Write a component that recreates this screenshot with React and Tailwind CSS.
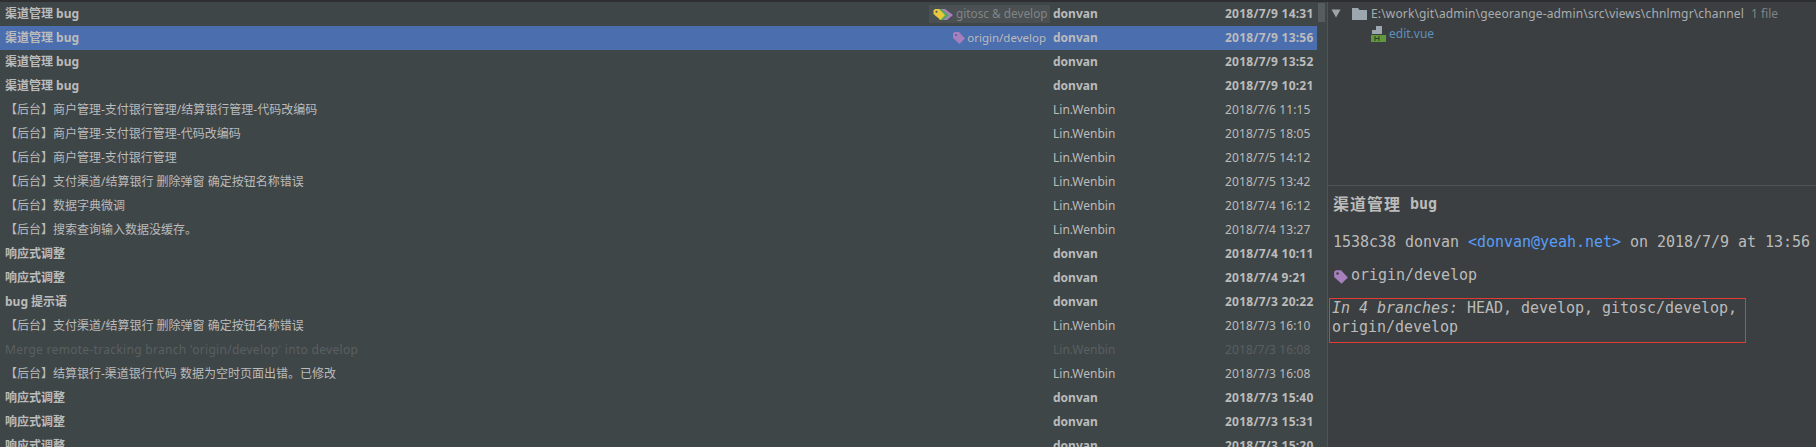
const B = 'bold'
const L = 'normal'
const D = 'dim'

const commits = [
  ['渠道管理 bug', 'donvan', '2018/7/9 14:31', B],
  ['渠道管理 bug', 'donvan', '2018/7/9 13:56', B],
  ['渠道管理 bug', 'donvan', '2018/7/9 13:52', B],
  ['渠道管理 bug', 'donvan', '2018/7/9 10:21', B],
  ['【后台】商户管理-支付银行管理/结算银行管理-代码改编码', 'Lin.Wenbin', '2018/7/6 11:15', L],
  ['【后台】商户管理-支付银行管理-代码改编码', 'Lin.Wenbin', '2018/7/5 18:05', L],
  ['【后台】商户管理-支付银行管理', 'Lin.Wenbin', '2018/7/5 14:12', L],
  ['【后台】支付渠道/结算银行 删除弹窗 确定按钮名称错误', 'Lin.Wenbin', '2018/7/5 13:42', L],
  ['【后台】数据字典微调', 'Lin.Wenbin', '2018/7/4 16:12', L],
  ['【后台】搜索查询输入数据没缓存。', 'Lin.Wenbin', '2018/7/4 13:27', L],
  ['响应式调整', 'donvan', '2018/7/4 10:11', B],
  ['响应式调整', 'donvan', '2018/7/4 9:21', B],
  ['bug 提示语', 'donvan', '2018/7/3 20:22', B],
  ['【后台】支付渠道/结算银行 删除弹窗 确定按钮名称错误', 'Lin.Wenbin', '2018/7/3 16:10', L],
  ["Merge remote-tracking branch 'origin/develop' into develop", 'Lin.Wenbin', '2018/7/3 16:08', D],
  ['【后台】结算银行-渠道银行代码 数据为空时页面出错。已修改', 'Lin.Wenbin', '2018/7/3 16:08', L],
  ['响应式调整', 'donvan', '2018/7/3 15:40', B],
  ['响应式调整', 'donvan', '2018/7/3 15:31', B],
  ['响应式调整', 'donvan', '2018/7/3 15:20', B],
]

function TagIcon({ hole, size = 14, className = '' }) {
  return (
    <svg width={size} height={size} viewBox="0 0 14 14" className={`shrink-0 ${className}`}>
      <path d="M1 2.5 L2.5 1 H7 L13 7.5 L7.5 13 L1 7 Z" fill="#a77fbd" />
      <circle cx="4" cy="4" r="1.1" fill={hole} />
    </svg>
  )
}

function MultiTagIcon() {
  return (
    <svg width="21" height="13" viewBox="0 0 21 13" className="shrink-0">
      <path d="M12 1 L20 7 L14 12 L10 12 L15 7 L8 1 Z" fill="#a77fbd" />
      <path d="M8 1 L16 7 L10 12 L6 12 L11 7 L4 1 Z" fill="#55a85a" />
      <path d="M0.5 2.5 L2 1 H6 L12 7 L7.5 12 L0.5 6 Z" fill="#e8c83c" />
      <circle cx="3.5" cy="3.7" r="1" fill="#4b5052" />
    </svg>
  )
}

function CommitRow({ row, index }) {
  const [title, author, date, kind] = row
  const selected = index === 1
  const color = kind === D ? 'text-[#5a5f61]' : 'text-[#bbbbbb]'
  const weight = kind === B ? 'font-bold' : 'font-normal'
  return (
    <div className={`flex h-6 shrink-0 items-center text-xs ${color} ${weight} ${selected ? 'bg-[#4b6eaf]' : ''}`}>
      <div className="flex w-[1053px] shrink-0 items-center pl-[5px]">
        <span className={`flex-1 truncate ${kind === D ? 'tracking-[0.3px]' : ''}`}>{title}</span>
        {index === 0 && (
          <span className="mr-[3px] flex h-[18px] w-[121px] items-center gap-[2px] bg-[#4b5052] pl-1 text-[11.8px] font-normal text-[#808587]">
            <MultiTagIcon />
            gitosc &amp; develop
          </span>
        )}
        {index === 1 && (
          <span className="mr-[7px] flex items-center gap-[1px] text-[11.5px] font-normal text-[#bbbbbb]">
            <TagIcon hole="#4b6eaf" />
            origin/develop
          </span>
        )}
      </div>
      <div className="w-[172px] shrink-0">{author}</div>
      <div className={`flex-1 whitespace-nowrap ${kind === B ? 'tracking-[0.25px]' : 'tracking-[0.12px]'}`}>{date}</div>
    </div>
  )
}

export default function App() {
  return (
    <div
      className="flex h-[447px] w-[1816px] flex-col overflow-hidden bg-[#3c3f41]"
      style={{ fontFamily: '"Noto Sans", "Noto Sans CJK SC", sans-serif' }}
    >
      <div className="h-[2px] shrink-0 bg-[#2d2f30]" />
      <div className="flex min-h-0 flex-1">
        <div className="flex w-[1317px] shrink-0 flex-col overflow-hidden bg-[#3f4648]">
          {commits.map((row, i) => (
            <CommitRow key={i} row={row} index={i} />
          ))}
        </div>
        <div className="w-[10px] shrink-0 bg-[#3f4648] pl-[1px]">
          <div className="mt-px h-[19px] w-[7px] bg-[#595c5e]" />
        </div>
        <div className="flex min-w-0 flex-1 flex-col border-l border-[#505456]">
          <div className="h-[183px] shrink-0 text-xs">
            <div className="flex h-[21px] items-center pt-[2px]">
              <svg width="10" height="9" viewBox="0 0 10 9" className="ml-[3px] shrink-0">
                <path d="M0.5 0.5 H9.5 L5 8.5 Z" fill="#9fa2a4" />
              </svg>
              <svg width="15" height="12" viewBox="0 0 15 12" className="ml-[11px] shrink-0">
                <path d="M0 0 H6 L7.5 2 H15 V12 H0 Z" fill="#9da7b0" />
              </svg>
              <span className="ml-[4px] whitespace-nowrap tracking-[0.15px] text-[#a8adb0]">
                E:\work\git\admin\geeorange-admin\src\views\chnlmgr\channel
              </span>
              <span className="ml-[7px] text-[#7f8385]">1 file</span>
            </div>
            <div className="flex h-[22px] items-center pl-[43px]">
              <svg width="15" height="16" viewBox="0 0 15 16" className="shrink-0">
                <path d="M5 0 H11 V8 H1 V4 H5 Z" fill="#9da7b0" />
                <rect x="0" y="9" width="15" height="7" fill="#62973f" />
                <path d="M4 10 V15 M8 10 V15 M4 12.5 H8" stroke="#2e3d20" strokeWidth="1" />
              </svg>
              <span className="ml-[3px] text-[#5e8fbd]">edit.vue</span>
            </div>
          </div>
          <div
            className="flex flex-1 flex-col border-t border-[#505456] pl-[5px] pt-[9px] text-[15px] leading-[19px] tracking-[-0.03px] text-[#bbbbbb]"
            style={{ fontFamily: '"DejaVu Sans Mono", "Noto Sans CJK SC", monospace' }}
          >
            <div className="flex h-[19px] items-center font-bold">
              <span className="text-base tracking-[1px]">渠道管理</span>
              <span className="ml-[9px]">bug</span>
            </div>
            <div className="mt-[19px] whitespace-nowrap">
              1538c38 donvan <span className="text-[#589df6]">&lt;donvan@yeah.net&gt;</span> on 2018/7/9 at 13:56
            </div>
            <div className="mt-[14px] flex items-center gap-[2px]">
              <TagIcon hole="#3c3f41" size={16} className="mt-[3px]" />
              origin/develop
            </div>
            <div className="-ml-[4px] mt-[13px] h-[45px] w-[417px] border border-[#e53935] pl-[2px]">
              <i>In 4 branches:</i> HEAD, develop, gitosc/develop, origin/develop
            </div>
          </div>
        </div>
      </div>
    </div>
  )
}
